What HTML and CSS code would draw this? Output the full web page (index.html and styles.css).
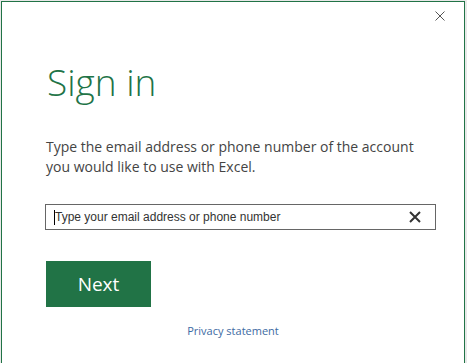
FILE: index.html
```html
<!DOCTYPE html>
<html lang="en">

<head>
    <meta charset="UTF-8">
    <meta name="viewport" content="width=device-width, initial-scale=1.0">
    <title>Sign in</title>
    <link rel="stylesheet" href="styles.css">
</head>

<body>
    <div class="dialog">
        <div class="dialog-top">
            <button class="close" aria-label="Close">
                <svg width="10" height="10" viewBox="0 0 10 10">
                    <path d="M0.5 0.5 L9.5 9.5 M9.5 0.5 L0.5 9.5" stroke="#555" stroke-width="1" fill="none" />
                </svg>
            </button>
        </div>
        <div class="content">
            <h1>Sign in</h1>
            <p class="intro">Type the email address or phone number of the account you would like to use with Excel.</p>
            <div class="field">
                <span class="caret"></span>
                <span class="placeholder">Type your email address or phone number</span>
                <button class="clear" aria-label="Clear">
                    <svg width="12" height="12" viewBox="0 0 12 12">
                        <path d="M1 1 L11 11 M11 1 L1 11" stroke="#333" stroke-width="2" fill="none" />
                    </svg>
                </button>
            </div>
            <button class="next">Next</button>
        </div>
        <div class="footer">
            <a href="#">Privacy statement</a>
        </div>
    </div>
</body>

</html>
```

FILE: styles.css
```css
/* Reset */
body,
h1,
p {
    margin: 0;
    padding: 0;
}

html,
body {
    height: 100%;
}

body {
    background-color: #e8e8e8;
    padding: 1px 0 0 1px;
    box-sizing: border-box;
    font-family: 'Open Sans', sans-serif;
}

/* Janela */
.dialog {
    width: 464px;
    height: 100%;
    box-sizing: border-box;
    background-color: #fff;
    border: 1px solid #217346;
    border-bottom: none;
}

.dialog-top {
    display: flex;
    justify-content: flex-end;
    padding: 9px 19px 0 0;
    height: 30px;
    box-sizing: border-box;
}

.close {
    background: none;
    border: none;
    padding: 0;
    width: 10px;
    height: 10px;
    display: flex;
}

/* Conteúdo */
.content {
    padding: 0 0 0 44px;
}

h1 {
    color: #217346;
    font-weight: 300;
    font-size: 37px;
    line-height: 50px;
    margin-top: 25px;
    margin-left: 1px;
}

.intro {
    color: #444;
    font-size: 14px;
    line-height: 20px;
    margin-top: 30px;
    width: 395px;
}

.field {
    display: flex;
    align-items: center;
    width: 391px;
    height: 26px;
    box-sizing: border-box;
    border: 1px solid #666;
    margin-top: 27px;
    margin-left: -1px;
    padding: 0 14px 0 8px;
}

.caret {
    width: 1px;
    height: 15px;
    background-color: #000;
}

.placeholder {
    flex: 1;
    font-family: 'Liberation Sans', Arial, sans-serif;
    font-size: 12px;
    color: #333;
}

.clear {
    background: none;
    border: none;
    padding: 0;
    display: flex;
}

.next {
    display: block;
    width: 105px;
    height: 46px;
    margin-top: 31px;
    background-color: #217346;
    border: none;
    color: #fff;
    font-family: 'Open Sans', sans-serif;
    font-size: 19px;
}

/* Rodapé */
.footer {
    text-align: center;
    margin-top: 11px;
}

.footer a {
    color: #3d6aa3;
    text-decoration: none;
    font-size: 11px;
}
```
